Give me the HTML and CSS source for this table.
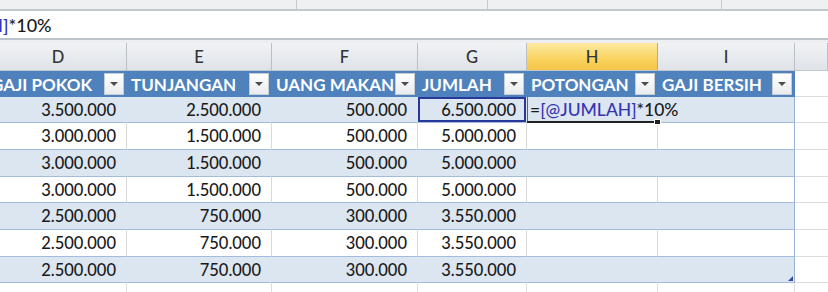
FILE: index.html
```html
<!DOCTYPE html>
<html>
<head>
<meta charset="utf-8">
<link rel="stylesheet" href="styles.css">
</head>
<body>
<div class="top">
  <div class="seg"></div><div class="seg"></div><div class="seg"></div><div class="seg"></div>
</div>
<div class="fbar">
  <div class="ftext"><span class="clip"><span class="ref">=[@JUMLAH</span></span><span class="ref">]</span>*10%</div>
</div>
<div class="gap"></div>
<div class="sheet">
  <div class="row colhdr">
    <div class="ch">D</div><div class="ch">E</div><div class="ch">F</div><div class="ch">G</div><div class="ch active">H</div><div class="ch">I</div><div class="ch"></div>
  </div>
  <div class="row thead">
    <div class="th first"><span>GAJI POKOK</span><span class="dd"></span></div>
    <div class="th"><span>TUNJANGAN</span><span class="dd"></span></div>
    <div class="th"><span>UANG MAKAN</span><span class="dd"></span></div>
    <div class="th"><span>JUMLAH</span><span class="dd"></span></div>
    <div class="th"><span>POTONGAN</span><span class="dd"></span></div>
    <div class="th last"><span>GAJI BERSIH</span><span class="dd"></span></div>
    <div class="cx"></div>
  </div>
  <div class="row drow band h26">
    <div class="c">3.500.000</div><div class="c">2.500.000</div><div class="c">500.000</div><div class="c refbox">6.500.000</div>
    <div class="c edit"><span class="eq">=</span><span class="ref">[@JUMLAH]</span>*10%<span class="caret"></span><span class="handle"></span></div>
    <div class="c last"></div><div class="cx"></div>
  </div>
  <div class="row drow h27">
    <div class="c">3.000.000</div><div class="c">1.500.000</div><div class="c">500.000</div><div class="c">5.000.000</div><div class="c"></div><div class="c last"></div><div class="cx"></div>
  </div>
  <div class="row drow band h27">
    <div class="c">3.000.000</div><div class="c">1.500.000</div><div class="c">500.000</div><div class="c">5.000.000</div><div class="c"></div><div class="c last"></div><div class="cx"></div>
  </div>
  <div class="row drow h26">
    <div class="c">3.000.000</div><div class="c">1.500.000</div><div class="c">500.000</div><div class="c">5.000.000</div><div class="c"></div><div class="c last"></div><div class="cx"></div>
  </div>
  <div class="row drow band h27">
    <div class="c">2.500.000</div><div class="c">750.000</div><div class="c">300.000</div><div class="c">3.550.000</div><div class="c"></div><div class="c last"></div><div class="cx"></div>
  </div>
  <div class="row drow h27">
    <div class="c">2.500.000</div><div class="c">750.000</div><div class="c">300.000</div><div class="c">3.550.000</div><div class="c"></div><div class="c last"></div><div class="cx"></div>
  </div>
  <div class="row drow band h26">
    <div class="c">2.500.000</div><div class="c">750.000</div><div class="c">300.000</div><div class="c">3.550.000</div><div class="c"></div><div class="c last"><span class="resize"></span></div><div class="cx"></div>
  </div>
  <div class="row erow">
    <div class="e"></div><div class="e"></div><div class="e"></div><div class="e"></div><div class="e"></div><div class="e"></div><div class="ex"></div>
  </div>
</div>
</body>
</html>
```
FILE: styles.css
```css
* { box-sizing: border-box; }
html, body { margin: 0; padding: 0; }
body {
  width: 828px;
  height: 292px;
  overflow: hidden;
  background: #fff;
  font-family: Lato, "Open Sans", sans-serif;
  color: #1a1a1a;
}
.top {
  height: 9px;
  display: grid;
  grid-template-columns: 297px 191px 234px 1fr;
  background: #eef0f2;
}
.seg { border-right: 1px solid #c6cbd1; }
.seg:last-child { border-right: 0; }
.fbar {
  height: 31px;
  border-top: 2px solid #c3c8cf;
  border-bottom: 2px solid #bcc2c9;
  background: #fff;
  display: flex;
  align-items: center;
  overflow: hidden;
}
.ftext {
  font-size: 18px;
  font-weight: 500;
  white-space: nowrap;
  display: flex;
  align-items: center;
}
.clip {
  display: inline-flex;
  justify-content: flex-end;
  width: 3px;
  overflow: hidden;
}
.ref { color: #3434b4; }
.gap { height: 3px; background: #eceef1; }
.sheet { margin-left: -10px; width: 838px; }
.row {
  display: grid;
  grid-template-columns: 137px 145px 146px 109px 131px 137px 1fr;
}
.colhdr { height: 28px; }
.ch {
  background: linear-gradient(#f1f3f5, #dfe3e8);
  border-right: 1px solid #b9c0c8;
  border-bottom: 1px solid #c2c8d0;
  display: flex;
  align-items: center;
  justify-content: center;
  font-size: 16.5px;
  font-weight: 500;
  color: #333;
}
.ch.active {
  background: linear-gradient(#fde9a2, #f9d35e 60%, #f5c44a);
  border-right-color: #d9a93a;
}
.thead { height: 26px; }
.th {
  background: #4f81bd;
  color: #fff;
  font-weight: 700;
  font-size: 17px;
  display: flex;
  align-items: center;
  justify-content: space-between;
  padding: 0 3px 0 4px;
  white-space: nowrap;
}
.th.first { padding-left: 1px; }
.dd {
  flex: none;
  width: 20px;
  height: 22px;
  border: 1px solid #c5ccd4;
  background: linear-gradient(#ffffff, #e9ebee);
  display: flex;
  align-items: center;
  justify-content: center;
}
.dd::after {
  content: "";
  width: 0;
  height: 0;
  border-left: 4px solid transparent;
  border-right: 4px solid transparent;
  border-top: 4px solid #4d4d4d;
}
.cx {
  border-bottom: 1px solid #dadcdf;
}
.h26 { height: 26px; }
.h27 { height: 27px; }
.drow .c {
  background: #fff;
  border-right: 1px solid #d9d9d9;
  border-bottom: 1px solid #a3bcdb;
  display: flex;
  align-items: center;
  justify-content: flex-end;
  padding-right: 10px;
  font-size: 16.5px;
  font-weight: 500;
  white-space: nowrap;
}
.drow.band .c {
  background: #dce6f1;
  border-right-color: #dce6f1;
}
.drow .c.last { border-right-color: #95b3d7; position: relative; }
.drow .c.refbox { box-shadow: inset 0 0 0 2px #27379a; }
.drow .c.edit {
  justify-content: flex-start;
  padding: 0 0 0 3px;
  font-size: 17.5px;
  overflow: visible;
  position: relative;
  z-index: 2;
  border-bottom: 2px solid #222;
  box-shadow: inset 1px 0 0 #6b6a3c;
}
.caret {
  display: inline-block;
  width: 1px;
  height: 19px;
  background: #000;
  margin-left: 1px;
}
.handle {
  position: absolute;
  right: -4px;
  bottom: -4px;
  width: 7px;
  height: 6px;
  background: #222;
  border: 1px solid #fff;
}
.resize {
  position: absolute;
  right: 1px;
  bottom: 1px;
  width: 5px;
  height: 5px;
  background: #2f4f9a;
  clip-path: polygon(100% 0, 100% 100%, 0 100%);
}
.erow { height: 20px; }
.e { border-right: 1px solid #dadcdf; }
```
